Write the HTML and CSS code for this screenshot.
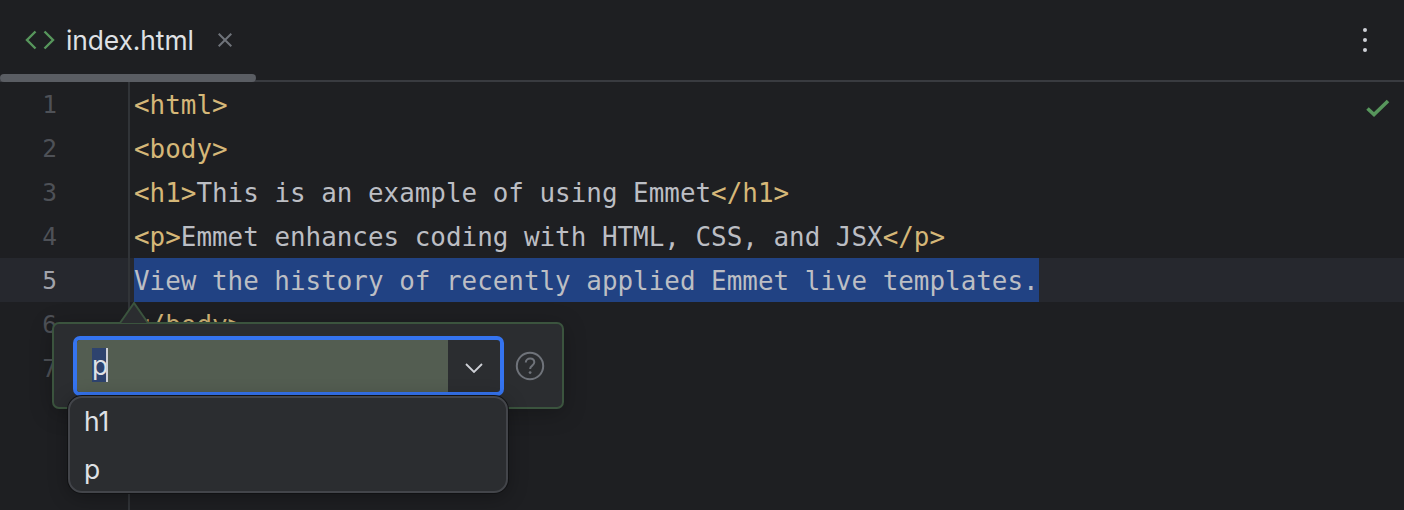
FILE: index.html
```html
<!DOCTYPE html>
<html lang="en">
<head>
<meta charset="utf-8">
<title>index.html</title>
<link rel="stylesheet" href="styles.css">
</head>
<body>
<div class="ide">
  <header class="tabbar">
    <div class="tab">
      <svg class="file-icon" width="30" height="22" viewBox="0 0 30 22"><path d="M10.5 2.5 2 11l8.500 8.500M19.500 2.500 28 11l-8.500 8.500" fill="none" stroke="#57965c" stroke-width="2.400"/></svg>
      <span class="tab-name">index.html</span>
      <svg class="tab-close" width="14" height="14" viewBox="0 0 14 14"><path d="M.7.7l12.600 12.600M13.300.7.700 13.300" fill="none" stroke="#6f737a" stroke-width="2"/></svg>
    </div>
    <svg class="more" width="6" height="26" viewBox="0 0 6 26"><circle cx="3" cy="3" r="2" fill="#ced0d6"/><circle cx="3" cy="13" r="2" fill="#ced0d6"/><circle cx="3" cy="23" r="2" fill="#ced0d6"/></svg>
    <div class="tab-indicator"></div>
  </header>
  <main class="editor">
    <div class="line"><span class="num">1</span><code class="code"><span class="tag">&lt;html&gt;</span></code></div>
    <div class="line"><span class="num">2</span><code class="code"><span class="tag">&lt;body&gt;</span></code></div>
    <div class="line"><span class="num">3</span><code class="code"><span class="tag">&lt;h1&gt;</span>This is an example of using Emmet<span class="tag">&lt;/h1&gt;</span></code></div>
    <div class="line"><span class="num">4</span><code class="code"><span class="tag">&lt;p&gt;</span>Emmet enhances coding with HTML, CSS, and JSX<span class="tag">&lt;/p&gt;</span></code></div>
    <div class="line current"><span class="num">5</span><code class="code"><span class="sel">View the history of recently applied Emmet live templates.</span></code></div>
    <div class="line"><span class="num">6</span><code class="code"><span class="tag">&lt;/body&gt;</span></code></div>
    <div class="line"><span class="num">7</span><code class="code"><span class="tag">&lt;/html&gt;</span></code></div>
    <div class="line"></div>
    <svg class="check" width="26" height="20" viewBox="0 0 26 20"><path d="M2.500 10.500 9 16.500 23 3" fill="none" stroke="#57965c" stroke-width="3.600"/></svg>
    <div class="popup">
      <svg class="popup-arrow" width="30" height="22" viewBox="0 0 30 22"><path d="M1 21 15 1l14 20z" fill="#2b2d30"/><path d="M1 21 15 1l14 20" fill="none" stroke="#3b543e" stroke-width="2"/></svg>
      <div class="combo">
        <div class="combo-input"><span class="combo-sel">p</span><span class="caret"></span></div>
        <div class="combo-btn">
          <svg width="18" height="10" viewBox="0 0 18 10"><path d="M1 1l8 8 8-8" fill="none" stroke="#ced0d6" stroke-width="1.800"/></svg>
        </div>
      </div>
      <svg class="help" width="30" height="30" viewBox="0 0 30 30"><circle cx="15" cy="15" r="13.200" fill="none" stroke="#6f737a" stroke-width="2"/><path d="M10.800 11.600c0-2.400 1.900-4 4.300-4s4.200 1.500 4.200 3.700c0 3.400-4.200 3.200-4.200 6.600" fill="none" stroke="#6f737a" stroke-width="2"/><circle cx="15.100" cy="21.600" r="1.400" fill="#6f737a"/></svg>
    </div>
    <ul class="menu">
      <li class="menu-item">h1</li>
      <li class="menu-item">p</li>
    </ul>
  </main>
</div>
</body>
</html>
```
FILE: styles.css
```css
* { box-sizing: border-box; }
html, body { margin: 0; height: 100%; background: #1e1f22; overflow: hidden; }
.ide { width: 1404px; height: 510px; display: flex; flex-direction: column; background: #1e1f22; }
.tabbar {
  position: relative; height: 82px; flex: none; display: flex; align-items: flex-start;
  justify-content: space-between; border-bottom: 2px solid #393b40;
}
.tab { display: flex; align-items: center; height: 80px; padding-left: 25px; }
.file-icon { margin-right: 11px; }
.tab-name { font: 26.4px/1 "Inter", "Liberation Sans", sans-serif; color: #dfe1e5; letter-spacing: -.1px; }
.tab-close { margin-left: 24px; }
.more { margin: 27px 36px 0 0; }
.tab-indicator {
  position: absolute; left: 0; bottom: -2px; width: 256px; height: 8px;
  background: #5a5d63; border-radius: 4px;
}
.editor { position: relative; flex: 1; overflow: hidden; }
.editor::before {
  content: ""; position: absolute; left: 128px; top: 0; bottom: 0; width: 2px; background: #313438; z-index: 1;
}
.line { display: flex; height: 44px; align-items: flex-start; }
.line.current { background: #26282e; }
.num {
  width: 134px; flex: none; padding-right: 77px; text-align: right; color: #4e5157;
  font: 24.5px/46px "DejaVu Sans Mono", monospace;
}
.current .num { color: #a1a3ab; }
.code {
  font: 25.91px/46px "DejaVu Sans Mono", monospace; color: #bcbec4; white-space: pre; display: block; height: 44px;
}
.tag { color: #d5b778; }
.sel { background: #214283; display: inline-block; height: 44px; }
.check { position: absolute; right: 13px; top: 16px; }
.popup {
  position: absolute; left: 52px; top: 240px; width: 512px; height: 87px; z-index: 2;
  display: flex; align-items: flex-start; padding: 12px 0 0 19px;
  background: #2b2d30; border: 2px solid #3b543e; border-radius: 7px;
  box-shadow: 0 4px 22px rgba(0,0,0,.25);
}
.popup-arrow { position: absolute; left: 65px; top: -22px; }
.combo {
  display: flex; width: 431px; height: 60px; border: 4px solid #3574f0; border-radius: 7px;
  overflow: hidden; background: #2b2d30; flex: none;
}
.combo-input {
  width: 371px; flex: none; background: #535d51; padding: 8px 0 0 15px; display: flex; align-items: flex-start;
  height: 100%;
}
.combo-sel {
  background: #2e436e; color: #dfe1e5; font: 26.4px/34px "Inter", "Liberation Sans", sans-serif; width: 14px; height: 34px;
  overflow: visible;
}
.caret { width: 2px; height: 34px; background: #ced0d6; }
.combo-btn { flex: 1; display: flex; align-items: center; justify-content: center; padding-top: 3px; }
.help { margin: 15px 0 0 11px; flex: none; }
.menu {
  position: absolute; left: 68px; top: 314px; width: 440px; height: 97px; margin: 0; padding: 0; list-style: none; z-index: 3;
  background: #2b2d30; border: 2px solid #43454a; border-radius: 14px; box-shadow: 0 0 0 1px #111214, 0 4px 20px rgba(0,0,0,.3);
}
.menu-item { height: 48px; padding-left: 14px; font: 26.4px/46px "Inter", "Liberation Sans", sans-serif; color: #dfe1e5; }
```
